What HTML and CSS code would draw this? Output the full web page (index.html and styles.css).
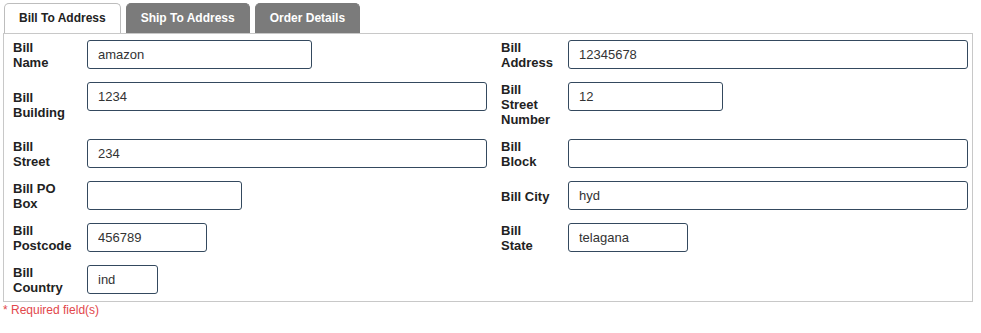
FILE: index.html
```html
<!DOCTYPE html>
<html>
<head>
<meta charset="utf-8">
<link rel="stylesheet" href="styles.css">
</head>
<body>
<div class="wrap">
  <div class="tabs">
    <div class="tab active">Bill To Address</div>
    <div class="tab">Ship To Address</div>
    <div class="tab">Order Details</div>
  </div>
  <div class="panel">
    <div class="form">
      <label class="lbl">Bill Name</label>
      <div class="fld"><input class="inp w225" value="amazon"></div>
      <label class="lbl r">Bill Address</label>
      <div class="fld"><input class="inp w400" value="12345678"></div>

      <label class="lbl">Bill Building</label>
      <div class="fld"><input class="inp w400" value="1234"></div>
      <label class="lbl r">Bill Street Number</label>
      <div class="fld"><input class="inp w155" value="12"></div>

      <label class="lbl">Bill Street</label>
      <div class="fld"><input class="inp w400" value="234"></div>
      <label class="lbl r">Bill Block</label>
      <div class="fld"><input class="inp w400" value=""></div>

      <label class="lbl">Bill PO Box</label>
      <div class="fld"><input class="inp w155" value=""></div>
      <label class="lbl r">Bill City</label>
      <div class="fld"><input class="inp w400" value="hyd"></div>

      <label class="lbl">Bill Postcode</label>
      <div class="fld"><input class="inp w120" value="456789"></div>
      <label class="lbl r">Bill State</label>
      <div class="fld"><input class="inp w120" value="telagana"></div>

      <label class="lbl">Bill Country</label>
      <div class="fld"><input class="inp w71" value="ind"></div>
    </div>
  </div>
  <div class="req">* Required field(s)</div>
</div>
</body>
</html>
```
FILE: styles.css
```css
html, body {
  margin: 0;
  padding: 0;
  background: #fff;
}
body {
  font-family: "Liberation Sans", Arial, sans-serif;
  color: #222;
}
.wrap {
  padding: 3px 0 0 3px;
  width: 970px;
}
.tabs {
  display: flex;
  gap: 5px;
  padding-left: 1px;
  height: 30px;
}
.tab {
  box-sizing: border-box;
  height: 30px;
  padding: 0 14px;
  line-height: 29px;
  font-size: 12px;
  font-weight: bold;
  color: #fff;
  background: #7b7b7b;
  border: 1px solid #7b7b7b;
  border-bottom: none;
  border-radius: 5px 5px 0 0;
}
.tab.active {
  background: #fff;
  color: #222;
  border-color: #bdbdbd;
}
.panel {
  border: 1px solid #c8c8c8;
  padding: 6px 4px 6px 9px;
}
.form {
  display: grid;
  grid-template-columns: 74px 400px 81px 400px;
  row-gap: 12px;
}
.lbl {
  align-self: center;
  font-size: 13px;
  font-weight: bold;
  line-height: 15px;
  color: #222;
  padding-right: 20px;
}
.lbl.r {
  padding-left: 14px;
  padding-right: 15px;
}
.fld {
  align-self: start;
}
.inp {
  box-sizing: border-box;
  display: block;
  height: 29px;
  padding: 0 10px;
  border: 1px solid #34495e;
  border-radius: 3px;
  font-family: "Liberation Sans", Arial, sans-serif;
  font-size: 13px;
  color: #333;
  background: #fff;
  outline: none;
}
.w400 { width: 400px; }
.w225 { width: 225px; }
.w155 { width: 155px; }
.w120 { width: 120px; }
.w71 { width: 71px; }
.req {
  font-size: 12px;
  line-height: 14px;
  padding-top: 1px;
  color: #e2474b;
}
```
